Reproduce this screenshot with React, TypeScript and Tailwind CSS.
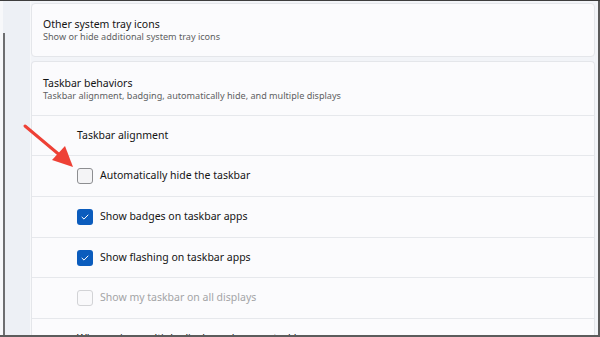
import React from 'react';

const font = { fontFamily: '"Noto Sans", "Open Sans", sans-serif' };

const CheckBox: React.FC<{ checked?: boolean; disabled?: boolean }> = ({ checked, disabled }) => {
  if (checked) {
    return (
      <div className="w-[16px] h-[16px] rounded-[3px] bg-[#0b5cbd] flex items-center justify-center shrink-0">
        <svg width="10" height="10" viewBox="0 0 10 10" fill="none">
          <path d="M2 5.2 L4 7.1 L8 3" stroke="white" strokeWidth="1" strokeLinecap="round" strokeLinejoin="round" />
        </svg>
      </div>
    );
  }
  return (
    <div
      className={
        disabled
          ? 'w-[16px] h-[16px] rounded-[3px] border border-[#d2d3d6] bg-[#f9f9fb] shrink-0'
          : 'w-[16px] h-[16px] rounded-[3px] border border-[#8d8e91] bg-[#f4f4f6] shrink-0'
      }
    />
  );
};

const SubRow: React.FC<{ label: string; box?: 'on' | 'off' | 'disabled'; h?: string }> = ({ label, box, h = 'h-[41px]' }) => (
  <div className={`${h} shrink-0 flex items-center gap-[7px] pl-[45px] border-t border-[#e6e8ec]`}>
    {box === 'on' && <CheckBox checked />}
    {box === 'off' && <CheckBox />}
    {box === 'disabled' && <CheckBox disabled />}
    <span className={box === 'disabled' ? 'text-[10.5px] text-[#a3a4a6]' : 'text-[10.5px] text-[#141414]'}>{label}</span>
  </div>
);

export default function App() {
  return (
    <div style={font} className="relative w-[600px] h-[337px] overflow-hidden bg-[#f2f4f8] border-t border-[#3d3d3d]">
      <div className="flex h-full">
        {/* left strip with scrollbar */}
        <div className="w-[31px] shrink-0 bg-[#edf0f5] flex border-r border-[#f7f8fa]">
          <div className="w-[3px] bg-[#f7f8fa]" />
          <div className="w-[2px] mt-[32px] bg-[#6d6e70]" />
        </div>

        <div className="flex-1 flex flex-col gap-[4px] pt-[2px] pr-[3px]">
          <div className="h-[54px] shrink-0 rounded-[4px] bg-[#fbfbfd] border border-[#e4e6ea] flex flex-col justify-center pl-[11px]">
            <div className="text-[10.5px] leading-[14px] text-[#141414]">Other system tray icons</div>
            <div className="text-[9.1px] leading-[12px] text-[#5e5f62]">Show or hide additional system tray icons</div>
          </div>

          <div className="flex-1 shrink-0 rounded-t-[4px] bg-[#fbfbfd] border border-[#e4e6ea] border-b-0 flex flex-col">
            <div className="h-[53px] shrink-0 flex flex-col justify-center pl-[11px] pt-[1px]">
              <div className="text-[10.5px] leading-[14px] text-[#141414]">Taskbar behaviors</div>
              <div className="text-[9.1px] leading-[12px] text-[#5e5f62]">
                Taskbar alignment, badging, automatically hide, and multiple displays
              </div>
            </div>
            <SubRow label="Taskbar alignment" h="h-[40px]" />
            <SubRow label="Automatically hide the taskbar" box="off" />
            <SubRow label="Show badges on taskbar apps" box="on" />
            <SubRow label="Show flashing on taskbar apps" box="on" h="h-[40px]" />
            <SubRow label="Show my taskbar on all displays" box="disabled" />
            <div className="shrink-0 pt-[12px] pl-[45px] border-t border-[#e6e8ec] text-[10.5px] text-[#141414] whitespace-nowrap">
              When using multiple displays, show my taskbar apps on
            </div>
          </div>
        </div>
        <div className="w-[2px] shrink-0 bg-[#5a5a5a]" />
      </div>

      {/* bottom frame edge */}
      <div className="absolute left-0 right-0 bottom-0 h-[2px] bg-[#5c5c5c]" />

      {/* annotation arrow */}
      <svg className="absolute left-0 top-0" width="90" height="180" viewBox="0 0 90 180">
        <line x1="25" y1="125" x2="62" y2="156" stroke="#ee4136" strokeWidth="3" strokeLinecap="round" />
        <polygon points="73,166 52,159 65,145" fill="#ee4136" />
      </svg>
    </div>
  );
}
